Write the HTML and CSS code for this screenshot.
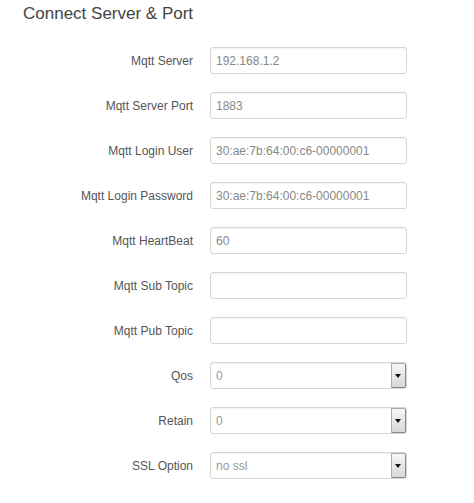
FILE: index.html
```html
<!DOCTYPE html>
<html lang="en">
<head>
    <meta charset="UTF-8">
    <meta name="viewport" content="width=device-width, initial-scale=1.0">
    <title>Connect Server &amp; Port</title>
    <link rel="stylesheet" href="styles.css">
</head>
<body>
    <h2 class="title">Connect Server &amp; Port</h2>

    <div class="form">
        <div class="row">
            <label>Mqtt Server</label>
            <input type="text" class="field" value="192.168.1.2">
        </div>
        <div class="row">
            <label>Mqtt Server Port</label>
            <input type="text" class="field" value="1883">
        </div>
        <div class="row">
            <label>Mqtt Login User</label>
            <input type="text" class="field" value="30:ae:7b:64:00:c6-00000001">
        </div>
        <div class="row">
            <label>Mqtt Login Password</label>
            <input type="text" class="field" value="30:ae:7b:64:00:c6-00000001">
        </div>
        <div class="row">
            <label>Mqtt HeartBeat</label>
            <input type="text" class="field" value="60">
        </div>
        <div class="row">
            <label>Mqtt Sub Topic</label>
            <input type="text" class="field" value="">
        </div>
        <div class="row">
            <label>Mqtt Pub Topic</label>
            <input type="text" class="field" value="">
        </div>
        <div class="row">
            <label>Qos</label>
            <div class="field select">
                <span class="value">0</span>
                <span class="arrow"></span>
            </div>
        </div>
        <div class="row">
            <label>Retain</label>
            <div class="field select">
                <span class="value">0</span>
                <span class="arrow"></span>
            </div>
        </div>
        <div class="row">
            <label>SSL Option</label>
            <div class="field select">
                <span class="value">no ssl</span>
                <span class="arrow"></span>
            </div>
        </div>
    </div>
</body>
</html>
```

FILE: styles.css
```css
body {
    margin: 0;
    font-family: "Liberation Sans", Arial, sans-serif;
    background-color: #fff;
    color: #555;
}
.title {
    margin: 0;
    padding: 4px 0 0 23px;
    height: 47px;
    box-sizing: border-box;
    font-size: 17px;
    font-weight: normal;
    line-height: 20px;
    color: #444;
}
.form {
    display: flex;
    flex-direction: column;
    gap: 18px;
}
.row {
    display: flex;
    align-items: center;
    height: 27px;
}
.row label {
    width: 193px;
    text-align: right;
    font-size: 12px;
    color: #555;
    margin-right: 17px;
}
.field {
    width: 197px;
    height: 27px;
    box-sizing: border-box;
    border: 1px solid #d6d6d6;
    border-radius: 3px;
    padding: 0 5px;
    font-family: "Liberation Sans", Arial, sans-serif;
    font-size: 12px;
    color: #888;
    background-color: #fff;
    box-shadow: inset 0 1px 1px rgba(0, 0, 0, 0.05);
    outline: none;
}
.select {
    display: flex;
    align-items: center;
    justify-content: space-between;
    padding-right: 0;
}
.select .value {
    color: #999;
}
.arrow {
    position: relative;
    width: 15px;
    height: 25px;
    box-sizing: border-box;
    border: 1px solid #888;
    border-top-color: #aaa;
    border-left-color: #aaa;
    border-radius: 0 2px 2px 0;
    background: linear-gradient(#f7f7f7, #d8d8d8);
}
.arrow::after {
    content: "";
    position: absolute;
    left: 3px;
    top: 10px;
    border-left: 3px solid transparent;
    border-right: 3px solid transparent;
    border-top: 4px solid #111;
}
```
